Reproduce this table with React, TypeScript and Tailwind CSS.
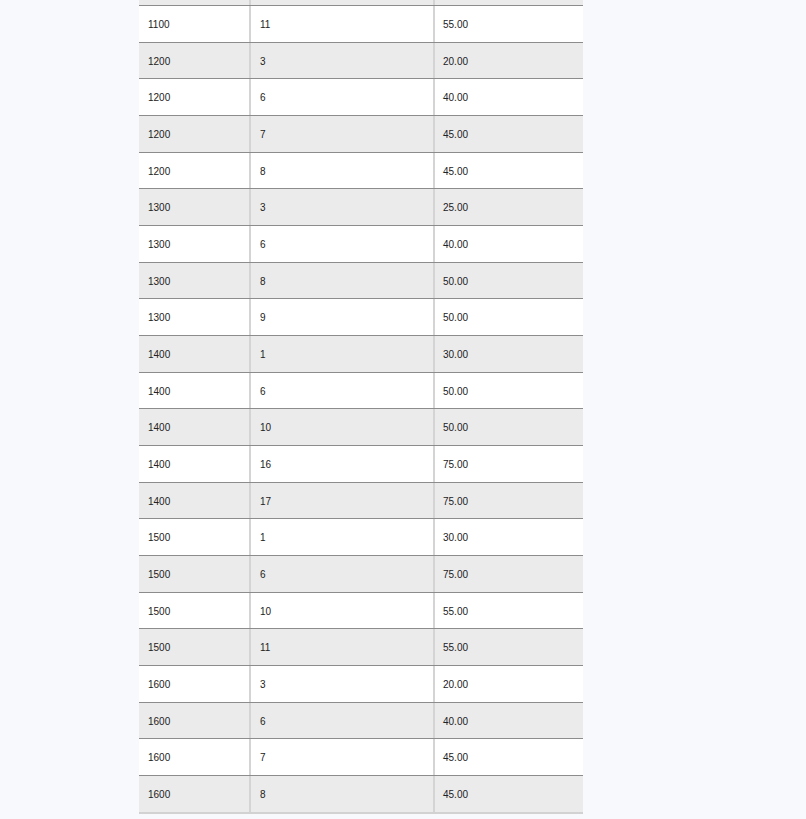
const ROWS: [string, string, string][] = [
  ['', '', ''],
  ['1100', '11', '55.00'],
  ['1200', '3', '20.00'],
  ['1200', '6', '40.00'],
  ['1200', '7', '45.00'],
  ['1200', '8', '45.00'],
  ['1300', '3', '25.00'],
  ['1300', '6', '40.00'],
  ['1300', '8', '50.00'],
  ['1300', '9', '50.00'],
  ['1400', '1', '30.00'],
  ['1400', '6', '50.00'],
  ['1400', '10', '50.00'],
  ['1400', '16', '75.00'],
  ['1400', '17', '75.00'],
  ['1500', '1', '30.00'],
  ['1500', '6', '75.00'],
  ['1500', '10', '55.00'],
  ['1500', '11', '55.00'],
  ['1600', '3', '20.00'],
  ['1600', '6', '40.00'],
  ['1600', '7', '45.00'],
  ['1600', '8', '45.00'],
];

export default function App() {
  return (
    <div className="min-h-screen w-full bg-[#f8f9fc] overflow-hidden font-['Liberation_Sans',Arial,sans-serif]">
      {/* table is scrolled: first row sits mostly above the viewport */}
      <div className="ml-[139px] mt-[-31.68px] w-[444px] border-b-2 border-[#d2d2d2]">
        {ROWS.map(([rank, qty, price], i) => (
          <div
            key={i}
            className={`grid grid-cols-[112px_184px_148px] h-[36.68px] border-t border-[#8c8c8c] text-[10px] text-[#222] ${i % 2 === 0 ? 'bg-[#ebebeb]' : 'bg-white'}`}
          >
            <div className="flex items-center pl-[9px] pt-[1px] border-r-2 border-[#d4d4d4]">{rank}</div>
            <div className="flex items-center pl-[9px] pt-[1px] border-r-2 border-[#d4d4d4]">{qty}</div>
            <div className="flex items-center pl-[8px] pt-[1px]">{price}</div>
          </div>
        ))}
      </div>
    </div>
  );
}
